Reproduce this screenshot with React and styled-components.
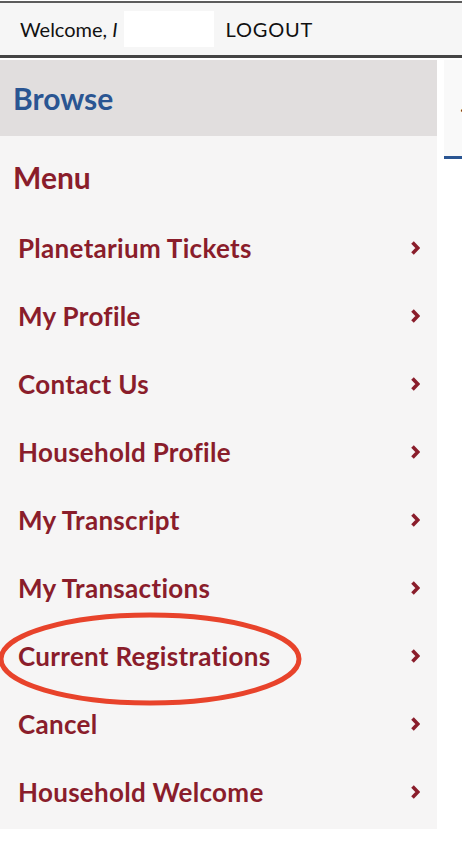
import React from 'react';
import styled, {createGlobalStyle} from 'styled-components';

const menuItems = [
    'Planetarium Tickets',
    'My Profile',
    'Contact Us',
    'Household Profile',
    'My Transcript',
    'My Transactions',
    'Current Registrations',
    'Cancel',
    'Household Welcome',
];

const Chevron = () => (
    <svg width="10" height="16" viewBox="0 0 10 16">
        <polyline points="2.5,2.5 7.8,8 2.5,13.5" fill="none" stroke="#8a1d2b" strokeWidth="3.6"/>
    </svg>
);

const Circled = () => (
    <Ellipse width="306" height="96" viewBox="0 0 306 96">
        <ellipse cx="153" cy="48" rx="149" ry="44" fill="none" stroke="#e8432b" strokeWidth="5"/>
    </Ellipse>
);

const App = () => {
    return (
        <>
            <GlobalStyle/>
            <TopBar>
                <Welcome>Welcome, <i>I</i></Welcome>
                <Redacted/>
                <Logout>LOGOUT</Logout>
            </TopBar>
            <Page>
                <Sidebar>
                    <BrowseHeader>Browse</BrowseHeader>
                    <MenuTitle>Menu</MenuTitle>
                    <MenuList>
                        {menuItems.map(item => (
                            <MenuItem key={item}>
                                <ItemLabel>{item}</ItemLabel>
                                <Chevron/>
                                {item === 'Current Registrations' && <Circled/>}
                            </MenuItem>
                        ))}
                    </MenuList>
                </Sidebar>
                <Main>
                    <Tab><TabText>·</TabText></Tab>
                </Main>
            </Page>
        </>
    );
};

export default App;

const GlobalStyle = createGlobalStyle`
    body {
        margin: 0;
        background: #ffffff;
        font-family: Lato, "Open Sans", sans-serif;
    }
`;

const TopBar = styled.div`
    display: flex;
    align-items: center;
    height: 52px;
    margin-top: 1px;
    border-top: 2px solid #5c5c5c;
    border-bottom: 3px solid #444444;
    background: #f6f6f6;
    padding-left: 20px;
    font-size: 20px;
    color: #111111;
`;

const Welcome = styled.span`
    white-space: pre;
    i {
        font-style: italic;
    }
`;

const Redacted = styled.div`
    width: 90px;
    height: 36px;
    background: #ffffff;
    margin-left: 6px;
`;

const Logout = styled.span`
    margin-left: 12px;
    letter-spacing: 0.8px;
`;

const Page = styled.div`
    display: flex;
    gap: 7px;
    padding-top: 2px;
    background: #ffffff;
`;

const Sidebar = styled.div`
    width: 437px;
    flex-shrink: 0;
    background: #f6f5f5;
    padding-bottom: 3px;
`;

const BrowseHeader = styled.h2`
    margin: 0;
    height: 76px;
    display: flex;
    align-items: center;
    padding-left: 13px;
    background: #e1dede;
    color: #2a5592;
    font-size: 30px;
    font-weight: 700;
`;

const MenuTitle = styled.h3`
    margin: 0;
    padding: 25px 0 20px 13px;
    line-height: 33px;
    color: #8a1d2b;
    font-size: 30px;
    font-weight: 700;
`;

const MenuList = styled.ul`
    list-style: none;
    margin: 0;
    padding: 0;
`;

const MenuItem = styled.li`
    position: relative;
    display: flex;
    align-items: center;
    justify-content: space-between;
    height: 68px;
    padding: 0 17px 0 18px;
    color: #8a1d2b;
`;

const ItemLabel = styled.span`
    font-size: 26px;
    font-weight: 700;
    letter-spacing: 0.3px;
`;

const Ellipse = styled.svg`
    position: absolute;
    left: -3px;
    top: -11px;
    pointer-events: none;
`;

const Main = styled.div`
    flex: 1;
    overflow: hidden;
`;

const Tab = styled.div`
    height: 96px;
    background: #f9f9f9;
    border-bottom: 3px solid #2a5592;
    display: flex;
    align-items: center;
`;

const TabText = styled.span`
    margin-left: 16px;
    color: #222222;
    font-size: 20px;
`;
